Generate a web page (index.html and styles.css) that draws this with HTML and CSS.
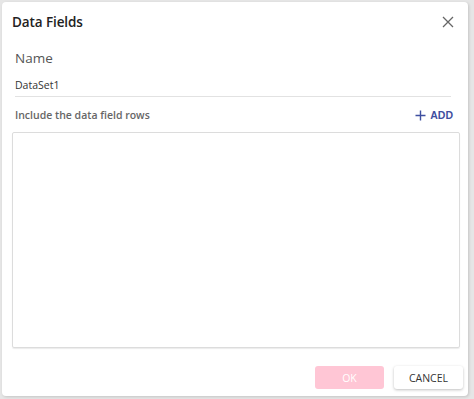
FILE: index.html
```html
<!DOCTYPE html>
<html>
<head>
<meta charset="utf-8">
<link rel="stylesheet" href="styles.css">
</head>
<body>
<div class="dialog">
  <div class="header">
    <div class="title">Data Fields</div>
    <svg class="close" width="12" height="12" viewBox="0 0 12 12"><path d="M1 1L11 11M11 1L1 11" stroke="#666" stroke-width="1.3" fill="none"/></svg>
  </div>
  <div class="content">
    <div class="label">Name</div>
    <div class="input">DataSet1</div>
    <div class="rows-head">
      <div class="sub">Include the data field rows</div>
      <div class="add"><svg width="11" height="11" viewBox="0 0 11 11"><path d="M5.5 0.5V10.5M0.5 5.5H10.5" stroke="#3f4fa0" stroke-width="1.4" fill="none"/></svg><span>ADD</span></div>
    </div>
    <div class="box"></div>
  </div>
  <div class="footer">
    <div class="btn ok">OK</div>
    <div class="btn cancel">CANCEL</div>
  </div>
</div>
</body>
</html>
```
FILE: styles.css
```css
html, body { margin: 0; padding: 0; }
body {
  width: 474px; height: 399px;
  background: #e6e6e6;
  font-family: "Open Sans", "Noto Sans", sans-serif;
  overflow: hidden;
}
.dialog {
  margin: 2px 0 0 2px;
  width: 466px; height: 394px;
  background: #fff;
  border-radius: 4px;
  box-shadow: 1px 1px 3px rgba(0,0,0,0.15);
  display: flex; flex-direction: column;
  box-sizing: border-box;
}
.dialog > * { flex-shrink: 0; }
.header {
  display: flex; align-items: center; justify-content: space-between;
  padding: 5px 14px 0 10px;
  height: 30px;
}
.title { font-size: 13.5px; font-weight: 600; color: #222; letter-spacing: -0.1px; }
.content { padding: 0 8px 0 10px; display: flex; flex-direction: column; }
.content > * { flex-shrink: 0; }
.label { margin: 11px 0 0 3px; font-size: 13.5px; color: #555; line-height: 20px; }
.input {
  margin: 9px 9px 0 3px; font-size: 10.5px; color: #333; line-height: 16px;
  padding-bottom: 3px; border-bottom: 1px solid #e2e2e2;
}
.rows-head { display: flex; justify-content: space-between; align-items: center; margin: 8px 7px 0 3px; height: 20px; }
.sub { font-size: 10.5px; font-weight: 600; color: #666; }
.add { display: flex; align-items: center; gap: 4px; font-size: 10.5px; font-weight: 700; color: #3f4fa0; font-family: "Liberation Sans", Arial, sans-serif; }
.box {
  margin-top: 7px;
  height: 214px;
  border: 1px solid #dcdcdc;
  box-shadow: 0 1px 1px rgba(0,0,0,0.08);
  border-radius: 2px;
}
.footer { display: flex; justify-content: flex-end; gap: 10px; padding: 18px 5px 0 0; }
.btn {
  width: 69px; height: 23px; border-radius: 3px;
  display: flex; align-items: center; justify-content: center;
  font-size: 10.5px;
}
.ok { background: #ffc6d5; color: #fff; }
.cancel { background: #fff; color: #333; box-shadow: 0 1px 3px rgba(0,0,0,0.25); }
```
